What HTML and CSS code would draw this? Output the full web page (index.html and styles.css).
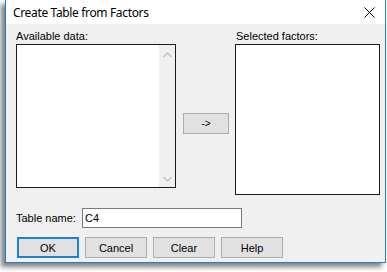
FILE: index.html
```html
<!DOCTYPE html>
<html>
<head>
<meta charset="utf-8">
<link rel="stylesheet" href="styles.css">
</head>
<body>
<div class="screen">
  <div class="dialog">
    <div class="titlebar">
      <span class="title">Create Table from Factors</span>
      <svg class="close" width="11" height="11" viewBox="0 0 11 11"><path d="M0.5 0.5 L10.5 10.5 M10.5 0.5 L0.5 10.5" stroke="#000" stroke-width="1" fill="none"/></svg>
    </div>
    <div class="content">
      <div class="labels">
        <span class="label-left">Available data:</span>
        <span>Selected factors:</span>
      </div>
      <div class="lists">
        <div class="listbox left">
          <div class="list-area"></div>
          <div class="scrollbar">
            <svg width="9" height="6" viewBox="0 0 9 6"><path d="M0.5 5 L4.5 1 L8.5 5" stroke="#c2c2c2" stroke-width="1.4" fill="none"/></svg>
            <svg width="9" height="6" viewBox="0 0 9 6"><path d="M0.5 1 L4.5 5 L8.5 1" stroke="#c2c2c2" stroke-width="1.4" fill="none"/></svg>
          </div>
        </div>
        <div class="middle">
          <div class="btn arrow">-&gt;</div>
        </div>
        <div class="listbox right"></div>
      </div>
      <div class="namerow">
        <span class="name-label">Table name:</span>
        <div class="textbox">C4</div>
      </div>
      <div class="buttons">
        <div class="btn default">OK</div>
        <div class="btn">Cancel</div>
        <div class="btn">Clear</div>
        <div class="btn">Help</div>
      </div>
    </div>
  </div>
</div>
</body>
</html>
```
FILE: styles.css
```css
html, body {
  margin: 0;
  padding: 0;
  background: #ffffff;
}
.screen {
  width: 387px;
  height: 272px;
  padding-left: 5px;
  box-sizing: border-box;
  overflow: hidden;
}
.dialog {
  width: 381px;
  height: 263px;
  box-sizing: border-box;
  background: #f0f0f0;
  border: 1px solid #1883d7;
  border-top: none;
  box-shadow: -4px 4px 5px rgba(0, 0, 0, 0.5);
  font-family: "Liberation Sans", Arial, sans-serif;
  font-size: 11px;
  color: #000;
}
.titlebar {
  height: 24px;
  background: #ffffff;
  display: flex;
  align-items: center;
  justify-content: space-between;
  padding: 0 10px 0 7px;
}
.title {
  font-family: "Noto Sans", "Open Sans", sans-serif;
  font-size: 12px;
  letter-spacing: -0.35px;
  line-height: 16px;
  margin-top: 1px;
}
.close {
  display: block;
  margin-top: 1px;
}
.content {
  padding: 5px 0 0 10px;
}
.labels {
  display: flex;
  height: 15px;
  line-height: 15px;
}
.label-left {
  width: 220px;
}
.lists {
  display: flex;
  align-items: flex-start;
}
.listbox {
  box-sizing: border-box;
  border: 1px solid #1a1a1a;
  background: #fff;
}
.listbox.left {
  width: 160px;
  height: 144px;
  display: flex;
}
.list-area {
  flex: 1;
}
.scrollbar {
  width: 16px;
  background: #f0f0f0;
  display: flex;
  flex-direction: column;
  align-items: center;
  justify-content: space-between;
  padding: 7px 0 5px;
}
.scrollbar svg {
  display: block;
}
.middle {
  width: 59px;
}
.listbox.right {
  width: 145px;
  height: 151px;
}
.btn {
  box-sizing: border-box;
  height: 21px;
  width: 62px;
  background: #e1e1e1;
  border: 1px solid #adadad;
  display: flex;
  align-items: center;
  justify-content: center;
  font-size: 11px;
}
.btn.arrow {
  width: 46px;
  margin: 69px 0 0 7px;
  font-size: 10px;
}
.btn.default {
  border: 2px solid #1883d7;
}
.namerow {
  display: flex;
  align-items: center;
  margin-top: 13px;
}
.name-label {
  width: 66px;
}
.textbox {
  box-sizing: border-box;
  width: 160px;
  height: 20px;
  background: #fff;
  border: 1px solid #7a7a7a;
  padding-left: 2px;
  line-height: 18px;
  font-size: 11px;
}
.buttons {
  display: flex;
  gap: 6px;
  margin: 9px 0 0 1px;
}
```
